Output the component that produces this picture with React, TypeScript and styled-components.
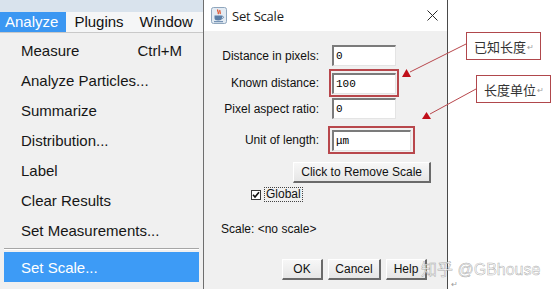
import styled, { createGlobalStyle } from "styled-components"

const GlobalStyle = createGlobalStyle`
    html, body {
        margin: 0;
        padding: 0;
        background: #ffffff;
    }
    body {
        font-family: "Liberation Sans", Arial, sans-serif;
    }
`

const Screen = styled.div`
    position: relative;
    display: flex;
    width: 554px;
    height: 289px;
    overflow: hidden;
    background: #ffffff;
`

/* ---------- ImageJ menu ---------- */

const MenuColumn = styled.div`
    display: flex;
    flex-direction: column;
    width: 203px;
    border-right: 1px solid #6e6e6e;
    background: #f0f0f0;
`

const TopStrip = styled.div`
    height: 12px;
    background: #d9e3ed;
`

const MenuBar = styled.div`
    display: flex;
    height: 20px;
    background: #f5f6f7;
    border-bottom: 1px solid #c9c9c9;
    font-size: 15px;
`

const MenuBarItem = styled.div<{ $active?: boolean }>`
    padding: 0 8px;
    line-height: 20px;
    color: ${(p) => (p.$active ? "#ffffff" : "#111111")};
    background: ${(p) => (p.$active ? "#3b97f2" : "transparent")};

    &:first-child {
        padding-left: 5px;
    }
`

const MenuPanel = styled.div`
    display: flex;
    flex-direction: column;
    padding-top: 2px;
`

const MenuItem = styled.div<{ $active?: boolean }>`
    display: flex;
    align-items: center;
    justify-content: space-between;
    height: 30px;
    margin: 0 4px;
    padding: 0 17px;
    font-size: 15px;
    color: ${(p) => (p.$active ? "#ffffff" : "#161616")};
    background: ${(p) => (p.$active ? "#3d9bf6" : "transparent")};
`

const MenuSeparator = styled.div`
    height: 1px;
    margin: 3px 4px;
    background: #a6a6a6;
    box-shadow: 0 1px 0 #ffffff;
`

/* ---------- Set Scale dialog ---------- */

const Dialog = styled.div`
    display: flex;
    flex-direction: column;
    width: 243px;
    border-right: 1px solid #4a4a4a;
`

const TitleBar = styled.div`
    display: flex;
    align-items: center;
    height: 31px;
    padding: 0 9px 0 7px;
    background: #ffffff;
`

const TitleText = styled.span`
    flex: 1;
    margin-left: 5px;
    font-family: "Open Sans", "Liberation Sans", sans-serif;
    font-size: 13px;
    letter-spacing: -0.2px;
    color: #1b1b1b;
`

const DialogBody = styled.div`
    flex: 1;
    display: flex;
    flex-direction: column;
    padding-top: 14px;
    background: #f0f0f0;
    font-size: 12px;
    color: #111111;
`

const FormRow = styled.div<{ $gap?: number }>`
    display: flex;
    align-items: center;
    gap: 13px;
    margin-top: ${(p) => p.$gap ?? 0}px;
`

const FieldLabel = styled.span`
    width: 115px;
    text-align: right;
    white-space: nowrap;
`

const Field = styled.div<{ $width?: number }>`
    box-sizing: border-box;
    width: ${(p) => p.$width ?? 64}px;
    height: 21px;
    padding: 2px 0 0 2px;
    background: #ffffff;
    border-style: solid;
    border-width: 2px 1px 1px 2px;
    border-color: #7b7b7b #e4e4e4 #e4e4e4 #7b7b7b;
    font-family: "Liberation Mono", monospace;
    font-size: 11px;
    line-height: 15px;
    color: #000000;
`

const Highlight = styled.div<{ $shift: number }>`
    padding: 1.5px ${(p) => p.$shift - 2}px;
    margin-left: -${(p) => p.$shift}px;
    border: 2px solid #b8474c;
`

const RightRow = styled.div`
    display: flex;
    justify-content: flex-end;
    padding-right: 16px;
    margin-top: 8px;
`

const JButton = styled.div<{ $width?: number }>`
    box-sizing: border-box;
    display: flex;
    align-items: center;
    justify-content: center;
    ${(p) => (p.$width ? `width: ${p.$width}px;` : "padding: 0 7px;")}
    height: 21px;
    background: linear-gradient(#f7f7f7, #e6e6e6);
    border-style: solid;
    border-width: 1px 2px 2px 1px;
    border-color: #ffffff #6a6a6a #6a6a6a #ffffff;
    font-size: 12px;
    color: #111111;
`

const CheckRow = styled.div`
    display: flex;
    align-items: center;
    gap: 3px;
    margin-top: 4px;
    padding-left: 47px;
`

const CheckBox = styled.div`
    box-sizing: border-box;
    width: 10px;
    height: 10px;
    background: #ffffff;
    border: 1px solid #3a3a3a;
    display: flex;
    align-items: center;
    justify-content: center;
`

const FocusLabel = styled.span`
    padding: 0 1px;
    border: 1px dotted #444444;
    line-height: 13px;
`

const ScaleInfo = styled.div`
    margin-top: 20px;
    padding-left: 17px;
    line-height: 14px;
`

const ButtonRow = styled.div`
    display: flex;
    gap: 5px;
    margin-top: 23px;
    padding-left: 78px;
`

/* ---------- annotations ---------- */

const NoteColumn = styled.div`
    flex: 1;
    display: flex;
    flex-direction: column;
    padding-top: 32px;
`

const NoteBox = styled.div<{ $left: number; $top: number }>`
    box-sizing: border-box;
    display: flex;
    align-items: center;
    justify-content: flex-end;
    width: 75px;
    height: 28px;
    margin: ${(p) => p.$top}px 0 0 ${(p) => p.$left}px;
    padding-right: 6px;
    border: 1.5px solid #b0474c;
    font-family: "Noto Sans CJK SC", sans-serif;
    font-size: 13px;
    color: #333333;
`

const ReturnMark = styled.span`
    margin-left: 1px;
    font-size: 8px;
    color: #9a9a9a;
`

const CornerMark = styled.span`
    margin-top: auto;
    margin-left: 3px;
    font-size: 8px;
    line-height: 9px;
    color: #9a9a9a;
`

const Overlay = styled.svg`
    position: absolute;
    left: 0;
    top: 0;
    pointer-events: none;
`

const Watermark = styled.div`
    position: absolute;
    left: 421px;
    top: 256px;
    font-family: "Liberation Sans", "Noto Sans CJK SC", sans-serif;
    font-size: 16px;
    color: rgba(255, 255, 255, 0.8);
    -webkit-text-stroke: 0.5px rgba(110, 110, 110, 0.6);
    white-space: nowrap;
`

function JavaIcon() {
    return (
        <svg width="16" height="17" viewBox="0 0 16 17">
            <rect x="0.5" y="0.5" width="15" height="16" rx="2" fill="#e3ebf3" stroke="#8fa6bd" />
            <path d="M7 2.5 C5.5 4 8.5 5 7 7 M9 3 C8 4.5 10 5.5 9 7" stroke="#e0512c" strokeWidth="1.3" fill="none" />
            <path d="M3.5 8.5 H11 V11 C11 12.8 9.5 13.5 7.2 13.5 C5 13.5 3.5 12.8 3.5 11 Z" fill="#5b7ea6" />
            <path d="M11 9.2 C13 9.2 13 11.4 11 11.4" stroke="#5b7ea6" strokeWidth="1" fill="none" />
            <rect x="3" y="14.2" width="9" height="1" fill="#5b7ea6" />
        </svg>
    )
}

function CloseIcon() {
    return (
        <svg width="11" height="11" viewBox="0 0 11 11">
            <path d="M0.5 0.5 L10.5 10.5 M10.5 0.5 L0.5 10.5" stroke="#2a2a2a" strokeWidth="1" />
        </svg>
    )
}

const menuItems = [
    { label: "Measure", key: "Ctrl+M" },
    { label: "Analyze Particles..." },
    { label: "Summarize" },
    { label: "Distribution..." },
    { label: "Label" },
    { label: "Clear Results" },
    { label: "Set Measurements..." },
]

export default function App() {
    return (
        <Screen>
            <GlobalStyle />

            <MenuColumn>
                <TopStrip />
                <MenuBar>
                    <MenuBarItem $active>Analyze</MenuBarItem>
                    <MenuBarItem>Plugins</MenuBarItem>
                    <MenuBarItem>Window</MenuBarItem>
                </MenuBar>
                <MenuPanel>
                    {menuItems.map((item) => (
                        <MenuItem key={item.label}>
                            <span>{item.label}</span>
                            {item.key && <span>{item.key}</span>}
                        </MenuItem>
                    ))}
                    <MenuSeparator />
                    <MenuItem $active>Set Scale...</MenuItem>
                </MenuPanel>
            </MenuColumn>

            <Dialog>
                <TitleBar>
                    <JavaIcon />
                    <TitleText>Set Scale</TitleText>
                    <CloseIcon />
                </TitleBar>
                <DialogBody>
                    <FormRow>
                        <FieldLabel>Distance in pixels:</FieldLabel>
                        <Field>0</Field>
                    </FormRow>
                    <FormRow $gap={3}>
                        <FieldLabel>Known distance:</FieldLabel>
                        <Highlight $shift={3}>
                            <Field>100</Field>
                        </Highlight>
                    </FormRow>
                    <FormRow $gap={1}>
                        <FieldLabel>Pixel aspect ratio:</FieldLabel>
                        <Field>0</Field>
                    </FormRow>
                    <FormRow $gap={7}>
                        <FieldLabel>Unit of length:</FieldLabel>
                        <Highlight $shift={4}>
                            <Field $width={79}>μm</Field>
                        </Highlight>
                    </FormRow>

                    <RightRow>
                        <JButton>Click to Remove Scale</JButton>
                    </RightRow>

                    <CheckRow>
                        <CheckBox>
                            <svg width="8" height="8" viewBox="0 0 8 8">
                                <path d="M1 3.8 L3 6 L7 1.2" stroke="#111" strokeWidth="1.6" fill="none" />
                            </svg>
                        </CheckBox>
                        <FocusLabel>Global</FocusLabel>
                    </CheckRow>

                    <ScaleInfo>Scale: &lt;no scale&gt;</ScaleInfo>

                    <ButtonRow>
                        <JButton $width={41}>OK</JButton>
                        <JButton $width={53}>Cancel</JButton>
                        <JButton $width={41}>Help</JButton>
                    </ButtonRow>
                </DialogBody>
            </Dialog>

            <NoteColumn>
                <NoteBox $left={18} $top={0}>
                    已知长度<ReturnMark>↵</ReturnMark>
                </NoteBox>
                <NoteBox $left={28} $top={15}>
                    长度单位<ReturnMark>↵</ReturnMark>
                </NoteBox>
                <CornerMark>↵</CornerMark>
            </NoteColumn>

            <Overlay width="554" height="289" viewBox="0 0 554 289">
                <line x1="466" y1="44" x2="410" y2="72" stroke="#b8474c" strokeWidth="1" />
                <polygon points="402,77 411,77 406.5,69" fill="#c0101a" />
                <line x1="476" y1="89" x2="430" y2="114" stroke="#b8474c" strokeWidth="1" />
                <polygon points="422,119 431,119 426.5,112" fill="#c0101a" />
            </Overlay>

            <Watermark>知乎 @GBhouse</Watermark>
        </Screen>
    )
}
